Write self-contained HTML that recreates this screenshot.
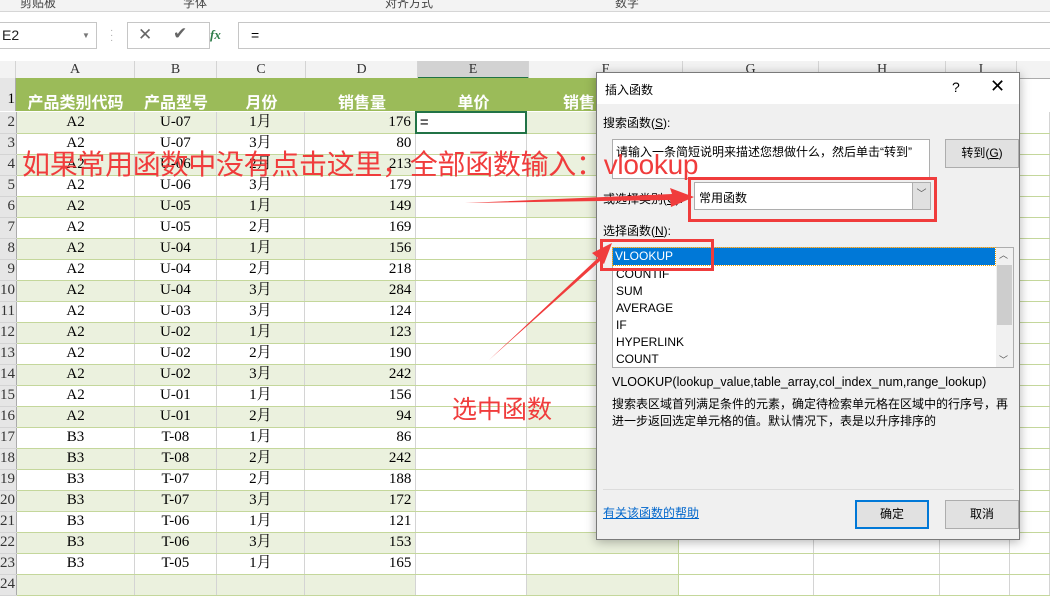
<!DOCTYPE html>
<html><head><meta charset="utf-8"><style>
*{margin:0;padding:0;box-sizing:border-box}
body{width:1050px;height:577px;overflow:hidden;background:#fff;position:relative;font-family:"Liberation Sans","Noto Sans CJK SC",sans-serif}
.abs{position:absolute}
table{border-collapse:collapse;table-layout:fixed;position:absolute;left:0;top:111px}
td{height:21px;line-height:19px;border-right:1px solid #d4d4d4;border-bottom:1px solid #d4d4d4;font-family:"Liberation Serif","Noto Serif CJK SC",serif;font-size:15px;text-align:center;color:#000;padding:0;white-space:nowrap;overflow:hidden}
tr{height:21px}
tr.g td{background:#ebf1de;border-bottom:1px solid #c4d79b}
tr.w td{border-bottom:1px solid #c4d79b}
tr.g td.e,tr.g td.o{background:#fff}
tr td.f{border-right:1px solid #c4d79b}
tr td.rh,tr.g td.rh{background:#e6e6e6;border-right:1px solid #ababab;border-bottom:1px solid #d4d4d4;text-align:right;font-size:15px;color:#333;padding-right:1px}
td.r{text-align:right;padding-right:4px}
.ch{position:absolute;top:61px;height:18px;background:#f3f3f3;border-right:1px solid #d4d4d4;border-bottom:1px solid #ababab;font-family:"Liberation Serif",serif;font-size:14px;text-align:center;color:#333;line-height:18px}
.hdr{position:absolute;top:78px;left:16px;width:580px;height:33px;background:#9bbb59;color:#fff;font-size:16px;font-weight:bold}
.hdr span{position:absolute;top:11px;text-align:center}
.dlg{position:absolute;left:596px;top:72px;width:424px;height:468px;background:#f0f0f0;border:1px solid #7a7a7a;box-shadow:0 2px 10px rgba(0,0,0,.3);font-size:12px;color:#000}
.red{color:#f03c3c;font-family:"Liberation Sans","Noto Sans CJK SC",sans-serif}
.btn{position:absolute;background:#e1e1e1;border:1px solid #adadad;text-align:center;font-size:12px}
</style></head><body>
<div class="abs" style="left:0;top:0;width:1050px;height:12px;background:#f3f3f3;border-bottom:1px solid #d6d6d6"></div>
<div class="abs" style="left:20px;top:-6px;font-size:12px;color:#444">剪贴板</div>
<div class="abs" style="left:183px;top:-6px;font-size:12px;color:#444">字体</div>
<div class="abs" style="left:385px;top:-6px;font-size:12px;color:#444">对齐方式</div>
<div class="abs" style="left:615px;top:-6px;font-size:12px;color:#444">数字</div>
<div class="abs" style="left:0;top:13px;width:1050px;height:46px;background:#fff"></div>
<div class="abs" style="left:-1px;top:22px;width:98px;height:27px;border:1px solid #c6c6c6;font-size:14px;line-height:25px;padding-left:2px;color:#222">E2<span style="position:absolute;left:82px;top:0;font-size:8px;color:#777">▼</span></div>
<div class="abs" style="left:110px;top:28px;color:#aaa;font-size:10px;line-height:5px">·<br>·<br>·</div>
<div class="abs" style="left:127px;top:22px;width:83px;height:27px;border:1px solid #c6c6c6;"></div>
<div class="abs" style="left:138px;top:25px;font-size:17px;color:#666">✕</div>
<div class="abs" style="left:173px;top:24px;font-size:17px;color:#666">✔</div>
<div class="abs" style="left:210px;top:27px;font-size:13px;color:#2e7d4a;font-style:italic;font-family:'Liberation Serif',serif;font-weight:bold">fx</div>
<div class="abs" style="left:238px;top:22px;width:816px;height:27px;border:1px solid #c6c6c6;font-size:14px;line-height:25px;padding-left:12px">=</div>
<div class="ch" style="left:0;width:16px"></div>
<div class="ch" style="left:16px;width:119px">A</div>
<div class="ch" style="left:135px;width:82px">B</div>
<div class="ch" style="left:217px;width:89px">C</div>
<div class="ch" style="left:306px;width:112px">D</div>
<div class="ch" style="left:418px;width:111px;background:#d2d2d2;border-bottom:2px solid #217346">E</div>
<div class="ch" style="left:529px;width:154px">F</div>
<div class="ch" style="left:683px;width:136px">G</div>
<div class="ch" style="left:819px;width:127px">H</div>
<div class="ch" style="left:946px;width:71px">I</div>
<div class="ch" style="left:1017px;width:40px"></div>
<div class="abs" style="left:0;top:78px;width:16px;height:33px;background:#e6e6e6;border-right:1px solid #ababab;font-family:'Liberation Serif',serif;font-size:15px;text-align:right;padding-top:13px">1</div>
<div class="hdr" style="width:667px">
<span style="left:0;width:119px">产品类别代码</span><span style="left:119px;width:82px">产品型号</span><span style="left:201px;width:89px">月份</span><span style="left:290px;width:112px">销售量</span><span style="left:402px;width:111px">单价</span><span style="left:513px;width:100px">销售</span></div>
<table>
<colgroup><col style="width:16px"><col style="width:119px"><col style="width:82px"><col style="width:89px"><col style="width:112px"><col style="width:111px"><col style="width:154px"><col style="width:136px"><col style="width:127px"><col style="width:71px"><col style="width:40px"></colgroup>
<tr class="g"><td class="rh">2</td><td>A2</td><td>U-07</td><td>1月</td><td class="r">176</td><td class="e" style="text-align:left;padding-left:3px;font-family:'Liberation Sans';border:2px solid #217346">=</td><td class="f"></td><td class="o"></td><td class="o"></td><td class="o"></td><td class="o"></td></tr>
<tr class="w"><td class="rh">3</td><td>A2</td><td>U-07</td><td>3月</td><td class="r">80</td><td></td><td class="f"></td><td></td><td></td><td></td><td></td></tr>
<tr class="g"><td class="rh">4</td><td>A2</td><td>U-06</td><td>2月</td><td class="r">213</td><td class="e"></td><td class="f"></td><td class="o"></td><td class="o"></td><td class="o"></td><td class="o"></td></tr>
<tr class="w"><td class="rh">5</td><td>A2</td><td>U-06</td><td>3月</td><td class="r">179</td><td></td><td class="f"></td><td></td><td></td><td></td><td></td></tr>
<tr class="g"><td class="rh">6</td><td>A2</td><td>U-05</td><td>1月</td><td class="r">149</td><td class="e"></td><td class="f"></td><td class="o"></td><td class="o"></td><td class="o"></td><td class="o"></td></tr>
<tr class="w"><td class="rh">7</td><td>A2</td><td>U-05</td><td>2月</td><td class="r">169</td><td></td><td class="f"></td><td></td><td></td><td></td><td></td></tr>
<tr class="g"><td class="rh">8</td><td>A2</td><td>U-04</td><td>1月</td><td class="r">156</td><td class="e"></td><td class="f"></td><td class="o"></td><td class="o"></td><td class="o"></td><td class="o"></td></tr>
<tr class="w"><td class="rh">9</td><td>A2</td><td>U-04</td><td>2月</td><td class="r">218</td><td></td><td class="f"></td><td></td><td></td><td></td><td></td></tr>
<tr class="g"><td class="rh">10</td><td>A2</td><td>U-04</td><td>3月</td><td class="r">284</td><td class="e"></td><td class="f"></td><td class="o"></td><td class="o"></td><td class="o"></td><td class="o"></td></tr>
<tr class="w"><td class="rh">11</td><td>A2</td><td>U-03</td><td>3月</td><td class="r">124</td><td></td><td class="f"></td><td></td><td></td><td></td><td></td></tr>
<tr class="g"><td class="rh">12</td><td>A2</td><td>U-02</td><td>1月</td><td class="r">123</td><td class="e"></td><td class="f"></td><td class="o"></td><td class="o"></td><td class="o"></td><td class="o"></td></tr>
<tr class="w"><td class="rh">13</td><td>A2</td><td>U-02</td><td>2月</td><td class="r">190</td><td></td><td class="f"></td><td></td><td></td><td></td><td></td></tr>
<tr class="g"><td class="rh">14</td><td>A2</td><td>U-02</td><td>3月</td><td class="r">242</td><td class="e"></td><td class="f"></td><td class="o"></td><td class="o"></td><td class="o"></td><td class="o"></td></tr>
<tr class="w"><td class="rh">15</td><td>A2</td><td>U-01</td><td>1月</td><td class="r">156</td><td></td><td class="f"></td><td></td><td></td><td></td><td></td></tr>
<tr class="g"><td class="rh">16</td><td>A2</td><td>U-01</td><td>2月</td><td class="r">94</td><td class="e"></td><td class="f"></td><td class="o"></td><td class="o"></td><td class="o"></td><td class="o"></td></tr>
<tr class="w"><td class="rh">17</td><td>B3</td><td>T-08</td><td>1月</td><td class="r">86</td><td></td><td class="f"></td><td></td><td></td><td></td><td></td></tr>
<tr class="g"><td class="rh">18</td><td>B3</td><td>T-08</td><td>2月</td><td class="r">242</td><td class="e"></td><td class="f"></td><td class="o"></td><td class="o"></td><td class="o"></td><td class="o"></td></tr>
<tr class="w"><td class="rh">19</td><td>B3</td><td>T-07</td><td>2月</td><td class="r">188</td><td></td><td class="f"></td><td></td><td></td><td></td><td></td></tr>
<tr class="g"><td class="rh">20</td><td>B3</td><td>T-07</td><td>3月</td><td class="r">172</td><td class="e"></td><td class="f"></td><td class="o"></td><td class="o"></td><td class="o"></td><td class="o"></td></tr>
<tr class="w"><td class="rh">21</td><td>B3</td><td>T-06</td><td>1月</td><td class="r">121</td><td></td><td class="f"></td><td></td><td></td><td></td><td></td></tr>
<tr class="g"><td class="rh">22</td><td>B3</td><td>T-06</td><td>3月</td><td class="r">153</td><td class="e"></td><td class="f"></td><td class="o"></td><td class="o"></td><td class="o"></td><td class="o"></td></tr>
<tr class="w"><td class="rh">23</td><td>B3</td><td>T-05</td><td>1月</td><td class="r">165</td><td></td><td class="f"></td><td></td><td></td><td></td><td></td></tr>
<tr class="g"><td class="rh">24</td><td></td><td></td><td></td><td></td><td class="e"></td><td class="f"></td><td class="o"></td><td class="o"></td><td class="o"></td><td class="o"></td></tr>
</table>
<div class="dlg">
<div class="abs" style="left:0;top:0;width:422px;height:31px;background:#fff"></div>
<div class="abs" style="left:8px;top:8px">插入函数</div>
<div class="abs" style="left:355px;top:6px;font-size:14px">?</div>
<div class="abs" style="left:393px;top:3px;font-size:18px">✕</div>
<div class="abs" style="left:6px;top:41px">搜索函数(<u>S</u>):</div>
<div class="abs" style="left:15px;top:66px;width:318px;height:40px;background:#fff;border:1px solid #adadad;padding:3px 3px;font-size:12px">请输入一条简短说明来描述您想做什么，然后单击“转到”</div>
<div class="btn" style="left:348px;top:66px;width:74px;height:29px;line-height:27px">转到(<u>G</u>)</div>
<div class="abs" style="left:6px;top:117px">或选择类别(<u>C</u>):</div>
<div class="abs" style="left:97px;top:109px;width:237px;height:28px;background:#fff;border:1px solid #adadad;padding:6px 4px">常用函数</div>
<div class="abs" style="left:315px;top:110px;width:18px;height:26px;background:#e0e0e0;border-left:1px solid #adadad;text-align:center;line-height:24px;font-size:10px;color:#555">﹀</div>
<div class="abs" style="left:6px;top:149px">选择函数(<u>N</u>):</div>
<div class="abs" style="left:15px;top:174px;width:402px;height:121px;background:#fff;border:1px solid #adadad"></div>
<div class="abs" style="left:16px;top:175px;width:382px;height:17px;background:#0078d7;color:#fff;padding:1px 2px;outline:1px dotted #f0a000">VLOOKUP</div>
<div class="abs" style="left:19px;top:193px;line-height:17px">COUNTIF<br>SUM<br>AVERAGE<br>IF<br>HYPERLINK<br>COUNT</div>
<div class="abs" style="left:399px;top:175px;width:17px;height:119px;background:#f0f0f0"></div>
<div class="abs" style="left:400px;top:192px;width:15px;height:60px;background:#cdcdcd"></div>
<div class="abs" style="left:402px;top:175px;font-size:9px;color:#555">︿</div>
<div class="abs" style="left:402px;top:280px;font-size:9px;color:#555">﹀</div>
<div class="abs" style="left:15px;top:302px;font-size:12.5px">VLOOKUP(lookup_value,table_array,col_index_num,range_lookup)</div>
<div class="abs" style="left:15px;top:323px;width:400px;line-height:17px">搜索表区域首列满足条件的元素，确定待检索单元格在区域中的行序号，再进一步返回选定单元格的值。默认情况下，表是以升序排序的</div>
<div class="abs" style="left:6px;top:416px;width:411px;height:1px;background:#dcdcdc"></div>
<div class="abs" style="left:6px;top:431px;color:#0066cc;text-decoration:underline">有关该函数的帮助</div>
<div class="btn" style="left:258px;top:427px;width:74px;height:29px;line-height:25px;border:2px solid #0078d7">确定</div>
<div class="btn" style="left:348px;top:427px;width:74px;height:29px;line-height:27px">取消</div>
</div>
<div class="abs red" style="left:22px;top:143px;font-size:28px;white-space:nowrap;letter-spacing:-0.3px">如果常用函数中没有点击这里，全部函数输入：vlookup</div>
<div class="abs red" style="left:452px;top:390px;font-size:25px">选中函数</div>
<div class="abs" style="left:688px;top:177px;width:249px;height:45px;border:3px solid #f03c3c"></div>
<div class="abs" style="left:600px;top:239px;width:114px;height:32px;border:3px solid #f03c3c"></div>
<svg class="abs" style="left:0;top:0" width="1050" height="577">
<polygon points="465,203 672,194 670,188 694,197 671,207 670,200" fill="#f03c3c"/>
<polygon points="489,360 598,258 592,253 612,243 604,264 600,261" fill="#f03c3c"/>
</svg>
</body></html>
